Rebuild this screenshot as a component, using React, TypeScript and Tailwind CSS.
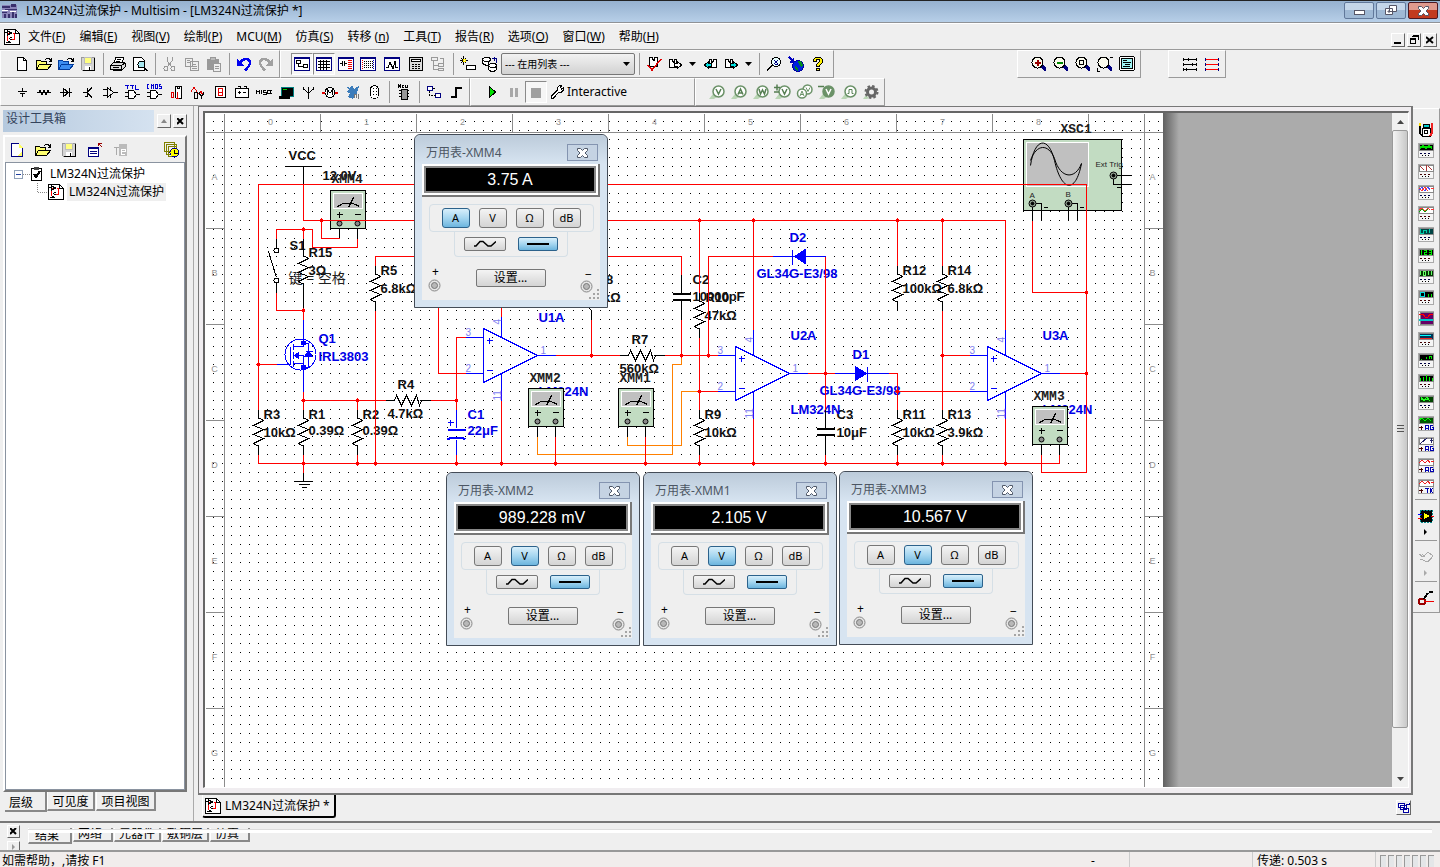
import { ReactNode } from "react";

type Point = [number, number];

const uiFont = "font-['Noto_Sans','Noto_Sans_CJK_SC',sans-serif]";

function Icon({ children, w = 16 }: { children: ReactNode; w?: number }) {
  return (
    <svg width={w} height={16} viewBox={`0 0 ${w} 16`} fill="none" stroke="#000" shapeRendering="crispEdges" className="shrink-0" aria-hidden="true">
      {children}
    </svg>
  );
}

function Tool({ label, children, boxed }: { label: string; children: ReactNode; boxed?: boolean }) {
  return (
    <button
      title={label}
      aria-label={label}
      className={`flex h-[22px] w-[22px] shrink-0 items-center justify-center ${boxed ? "border border-r-white border-b-white border-t-[#8a8a8a] border-l-[#8a8a8a] bg-[#f6f6f6]" : ""}`}
    >
      {children}
    </button>
  );
}

const Sep = () => (
  <span className="flex w-2 shrink-0 justify-center">
    <span className="h-[22px] w-px bg-[#9a9a9a]" />
  </span>
);

function Bar({ children, className = "" }: { children: ReactNode; className?: string }) {
  return (
    <div className={`flex h-7 shrink-0 items-center border-t border-l border-r border-b border-t-white border-l-white border-r-[#9a9a9a] border-b-[#9a9a9a] pl-[10px] ${className}`}>
      {children}
    </div>
  );
}

const Caret = ({ color = "#000" }: { color?: string }) => (
  <svg width="12" height="8" viewBox="0 0 12 8" className="shrink-0" aria-hidden="true">
    <path d="M2 2h7l-3.500 4z" fill={color} />
  </svg>
);

/* ---------- icons ---------- */

const SchematicIcon = () => (
  <Icon>
    <path d="M.5.500h11l4 4v11H.5z" fill="#fff" />
    <path d="M11.500.500v4h4" />
    <path d="M3.500 12V4.500H6M9 4.500h1.500v6H8" stroke="#f00" />
    <path d="M1 3.500h3M3.500 2v4l4-2zM8.500 7.500l-3 2 3 2M4 12l3 2M2 13.500h3" />
  </Icon>
);
const NewIcon = () => <Icon><path d="M3.500 1.500h6l3 3v10h-9z" fill="#fff" /><path d="M9.500 1.500v3h3" /></Icon>;
const OpenIcon = ({ fill = "#ffff70", stroke = "#000" }) => (
  <Icon>
    <path d="M.5 13.500v-9h4l1 1h5v3" fill={fill} stroke={stroke} />
    <path d="M.5 13.500l3-5h12l-4 5z" fill={fill} stroke={stroke} />
    <path d="M9 3.500l2-1h2l2 2M15.500 2v3h-3" />
  </Icon>
);
const SaveIcon = () => (
  <Icon>
    <path d="M1.500 1.500h13v13h-12l-1-1z" fill="#d4d4d4" stroke="#999" />
    <path d="M4.500 1.500h7v6h-7z" fill="#ffff80" stroke="#bbb" />
    <path d="M5 10h6v4H5z" fill="#fff" stroke="none" />
    <path d="M9 10.500v3M14.500 2v12.500H3" />
  </Icon>
);
const PrintIcon = () => (
  <Icon>
    <path d="M4.500 6.500l1-5h8l-1 5" fill="#fff" />
    <path d="M7 3.500h4M6 5.500h4" />
    <path d="M.5 9.500l3-3h11l1 1v3l-3 3H.5z" fill="#ddd" />
    <path d="M.5 9.500h11v4M12 9l3-2M3 11.500h6M2.500 14.500h9l3-3" />
  </Icon>
);
const PreviewIcon = () => (
  <Icon w={17}>
    <path d="M1.500 1.500h8l3 3v10h-11z" fill="#fff" />
    <circle cx="9.500" cy="8.500" r="3.500" fill="#a8e8f0" />
    <path d="M12 11l4 4M12 12l3 3" />
  </Icon>
);
const CutIcon = () => <Icon><path d="M5 1v4l5 6M10 1v4l-5 6" stroke="#999" /><circle cx="4" cy="12.500" r="2" stroke="#999" /><circle cx="11" cy="12.500" r="2" stroke="#999" /></Icon>;
const CopyIcon = () => <Icon><path d="M1.500 2.500h7v8h-7zM6.500 5.500h8v9h-8z" fill="#eee" stroke="#999" /><path d="M3 4.500h3M3 6.500h3M8 8.500h4M8 10.500h5M8 12.500h5" stroke="#999" /></Icon>;
const PasteIcon = () => <Icon><path d="M1 3h12v11H1z" fill="#999" stroke="none" /><path d="M4.500 1.500h5v3h-5z" fill="#bbb" stroke="#999" /><path d="M7.500 7.500h7v8h-7z" fill="#eee" stroke="#999" /><path d="M9 10.500h4M9 12.500h4" stroke="#999" /></Icon>;
const UndoIcon = ({ color = "#0000f0", flip = false }) => (
  <Icon><g transform={flip ? "translate(16 0) scale(-1 1)" : undefined}><path d="M4 7c2-5 10-5 10-.5 0 3-2 5-5 8" stroke={color} strokeWidth="2.500" /><path d="M1 2v8h7z" fill={color} stroke="none" /></g></Icon>
);
const HierIcon = () => <Icon><path d="M.5 1.500h15v13H.5z" fill="#fff" stroke="#000080" /><path d="M1 2.500h14" stroke="#000080" /><path d="M2.500 4.500h4v3h-4zM9.500 8.500h4v3h-4zM4.500 8v2.500h5" /></Icon>;
const GridIcon = () => <Icon><path d="M.5 1.500h15v13H.5z" fill="#fff" stroke="#000080" /><path d="M1 2.500h14" stroke="#000080" /><path d="M2 5.500h12M2 8.500h12M2 11.500h12M4.500 4v10M7.500 4v10M10.500 4v10" /></Icon>;
const SpiceIcon = () => <Icon><path d="M.5 1.500h15v13H.5z" fill="#fff" stroke="#000080" /><path d="M1 2.500h14" stroke="#000080" /><path d="M2 7.500h2M4.500 5v5M6.500 5v5M7 7.500h2" /><path d="M10 4.500h4M10 6.500h4M10 8.500h4M10 10.500h4M10 12.500h4" stroke="#e00" /></Icon>;
const DotsIcon = () => <Icon><path d="M.5 1.500h15v13H.5z" fill="#fff" stroke="#000080" /><path d="M1 2.500h14" stroke="#000080" /><path d="M4 5.500h9M4 7.500h9M4 9.500h9M4 11.500h9" strokeDasharray="1 1" /><path d="M2.500 4v10" stroke="#e00" strokeDasharray="1 1" /><path d="M13.500 4v10" stroke="#00c" strokeDasharray="1 1" /></Icon>;
const WaveIcon = () => <Icon><path d="M.5 1.500h15v13H.5z" fill="#fff" stroke="#000080" /><path d="M1 2.500h14" stroke="#000080" /><path d="M2 11.500h2l2-5 3 6 2-7v6h3" /></Icon>;
const CalcIcon = () => <Icon><path d="M1.500 1.500h13v13h-13z" fill="#ddd" /><path d="M3.500 3.500h9v2h-9z" fill="#fff" /><path d="M4 8.500h9M4 10.500h9M4 12.500h9" strokeDasharray="2 1" /></Icon>;
const TreeGreyIcon = () => <Icon><path d="M1.500 1.500h6v3h-6zM8.500 7.500h5v3h-5zM8.500 12.500h5v2h-5zM3.500 5v8.500h5M4 9.500h4M10 2.500h3v4" stroke="#999" /></Icon>;
const SparkIcon = () => <Icon><path d="M3.500 0v3M3.500 6v3M0 4.500h3M5 4.500h3M1 2l5 5M6 2L1 7" /><path d="M3 3.500h2v2H3z" stroke="#ffea00" /><path d="M6.500 9.500h9v4h-9z" fill="#fff" /></Icon>;
const DbIcon = () => (
  <Icon>
    <path d="M.5 3.500v4l3 1.500h3V2.500H3z" fill="#fff" /><ellipse cx="4.500" cy="3.500" rx="4" ry="2" fill="#fff" />
    <path d="M6.500 9.500v4l2 1.500h4l2-1.500v-4" fill="#fff" /><ellipse cx="10.500" cy="9.500" rx="4" ry="2" fill="#fff" />
    <path d="M10 2.500h5M14.500 3v4M12.500 1v4" stroke="#000080" />
  </Icon>
);
const CheckIcon = () => <Icon><path d="M3.500 1.500h3v2l2 1v-3h3v9h-8z" fill="#fff" /><path d="M2 9l4 5 9-11" stroke="#e00000" strokeWidth="1.500" /></Icon>;
const BackIcon = ({ fill = "#fff", left = false }) => (
  <Icon><g transform={left ? "translate(16 0) scale(-1 1)" : undefined}><path d="M1.500 3.500h3v2l2 1v-3h2v8h-7z" fill="#fff" /><path d="M6.500 7.500h3v-2l4 3.500-4 3.500v-2h-3z" fill={fill} /></g></Icon>
);
const FindIcon = () => <Icon><circle cx="10" cy="6" r="4.500" fill="#e8ffff" /><path d="M8 4l4 4M12 4L8 8M9 8h3" stroke="#000080" /><path d="M7 9l-6 6M6 9l-5 5" /></Icon>;
const GlobeIcon = () => <Icon><circle cx="10" cy="10" r="5.500" fill="#0020e0" stroke="#0000a0" /><path d="M10 5h3l2 4-2 2-2-2zM7 10l3 2v3l-3-2z" fill="#008c20" stroke="none" /><path d="M1 1l4 4M5.500 2v4h-4" stroke="#0000c0" strokeWidth="1.500" /></Icon>;
const HelpIcon = () => <Icon><path d="M3.500 5.500v-2l2-2h5l2 2v3l-3 3v1h-3v-2l3-3v-2h-3v2zM6.500 12.500h3v2h-3z" fill="#fff200" /></Icon>;

const Magnifier = ({ children }: { children?: ReactNode }) => (
  <Icon><circle cx="6.500" cy="6.500" r="5.500" fill="#fbfbee" />{children}<path d="M11 11l4 4M12 10l3 3" stroke="#000080" strokeWidth="2" /></Icon>
);
const FullIcon = () => <Icon><rect x=".5" y=".5" width="15" height="14" rx="2" fill="#fff" /><path d="M2.500 2.500h11v10h-11z" fill="#9ff5f5" /><path d="M4 4.500h4M4 6.500h8M6 8.500h5M4 10.500h7" /></Icon>;
const RowsIcon = ({ color = "#000", ends = "#000" }) => (
  <Icon>
    <path d="M1 3.500h14M1 8.500h14M1 13.500h14" stroke={color} />
    <path d="M1.500 2v3M14.500 2v3M1.500 7v3M14.500 7v3M1.500 12v3M14.500 12v3" stroke={ends} />
    {color === "#000" && <path d="M6.500 2v3M10.500 7v3M4.500 12v3" />}
  </Icon>
);

/* component row of the place toolbar */
const components: [string, ReactNode][] = [
  ["Source", <path d="M8.500 4v3M4 7.500h9M6 9.500h5M8.500 10v3" />],
  ["Basic", <path d="M1 8.500h2l1-2 2 4 2-4 2 4 2-4 1 2h2" />],
  ["Diode", <path d="M2 8.500h12M5.500 4.500v8l5-4zM11.500 4v9" />],
  ["Transistor", <path d="M3 8.500h4M7.500 4v9M8 7.500l4-4M8 9.500l4 4M5 12.500h3" />],
  ["Analog", <path d="M1 5.500h4M1 11.500h4M5.500 3.500v10l6-5zM12 8.500h4M8.500 3v2M8.500 12v2" />],
  ["TTL", <><path d="M1 1.500h4M3.500 1v4M6 1.500h4M8.500 1v4M11.500 1v4h3" stroke="#0000d0" /><path d="M4.500 6.500h5l3 4-3 4h-5zM1 8.500h3M1 12.500h3M13 10.500h3" fill="#fff" /></>],
  ["CMOS", <><path d="M3 .5H1.500v4H3M5.500 5V.5l1 1 1-1V5M9.500.5h2v4h-2zM15 .5h-2v2h2v2h-2" stroke="#0000d0" /><path d="M4.500 6.500h5l3 4-3 4h-5zM1 8.500h3M1 12.500h3M13 10.500h3" fill="#fff" /></>],
  ["Misc digital", <><path d="M7.500 14V2.500h6v12h-4M9.500 2v2h2V2" fill="#fff" /><path d="M3.500 8.500h2v5h-2zM9.500 8v6M8 14.500h3" stroke="#e00000" strokeWidth="1.500" /></>],
  ["Mixed", <><path d="M1 8l3-5 3 5 2 2 2-3 2 5" stroke="#e00000" /><path d="M4.500 8.500h3v6h-3zM9.500 8v2l2 2 2-2V8M11.500 12v3" /></>],
  ["Indicator", <><path d="M3.500 2.500h10v11h-10z" fill="#fff" /><path d="M6.500 4.500h4v7h-4zM6.500 8.500h4" stroke="#e00000" /></>],
  ["Power", <path d="M1.500 4.500h13v9h-13zM4 2.500h2v2M10 2.500h2v2M4 8.500h3M5.500 7v3M9 8.500h3" fill="#fff" />],
  ["Miscellaneous", <path d="M.5 10V6.500l1.500 1 1.500-1V10M5.500 6v4M10 6.500H7.500v2H10v1.500H7M13.500 6.500H11.500v3h2M16 6.500h-1.500v3H16" />],
  ["Advanced peripherals", <><path d="M3 3h12v9H3z" fill="#000" stroke="#008080" /><path d="M5 5.500h4" stroke="#0c0" /><path d="M1 12.500h10v2H1z" fill="#000" /></>],
  ["RF", <path d="M8.500 15V3M3.500 3v2l5 4 5-4V3" />],
  ["Electromechanical", <><circle cx="8" cy="8.500" r="5" fill="#fff" /><path d="M5.500 11V6l2.500 3 2.500-3v5" /><path d="M0 8.500h3M13 8.500h3" stroke="#e00000" strokeWidth="2" /></>],
  ["NI component", <><path d="M1 2l5 2 2-3 2 4 5-3-2 7-4 6-5-2 2-4-4-1 3-2z" fill="#3c7cba" stroke="none" /><path d="M10 14v-4h2v4M14.500 10v5" stroke="#777" /></>],
  ["Connector", <><rect x="4.500" y="1.500" width="8" height="13" rx="4" fill="#fff" /><path d="M7 4v8M10 4v8" strokeDasharray="1 2" /></>],
];

const MCUIcon = () => <Icon><path d="M2.500 4V1l1 1 1-1v3M8 1.500H6.500v2H8M9.500 1v2.500h2V1" /><path d="M5 5h6v10H5z" fill="#999" /><path d="M3 6.500h10M3 9.500h10M3 12.500h10" strokeDasharray="2 6" /></Icon>;
const BlockIcon = () => <Icon><path d="M1.500 2.500h5v4h-5z" fill="#fff" stroke="#000080" /><path d="M9.500 9.500h5v4h-5z" fill="#fff" stroke="#000080" /><path d="M7 4.500h3M3.500 7v4.500h6" strokeDasharray="2 1" /></Icon>;
const StepIcon = () => <Icon><path d="M3 13h5V4h6" strokeWidth="2" /></Icon>;
const WrenchIcon = () => <Icon w={14}><path d="M1.500 12l6-6V3.500l2-2h2l-1 2 1 1.500 2-1v2l-2 2H9l-5.500 6h-2z" fill="#fff" /></Icon>;

function Probe({ t, pre, solid }: { t: string; pre?: string; solid?: boolean }) {
  return (
    <svg width="18" height="16" viewBox="0 0 18 16" aria-hidden="true" fill="none">
      <path d="M1 15l4-5 4 3-3 2z" fill="#b9d5b4" />
      <circle cx="10.500" cy="7.500" r="5.500" fill={solid ? "#6b9268" : "#fff"} stroke="#6b9268" strokeWidth="1.500" />
      {t === "n" && <path d="M7.500 9.500H9v-4h3v4h1.500" stroke="#557e52" />}
      {t === "V" && <path d="M8 5l2.500 5L13 5" stroke={solid ? "#fff" : "#557e52"} strokeWidth="1.500" />}
      {t === "A" && <path d="M8 10.500l2.500-5.500 2.500 5.500M9 9h3" stroke="#557e52" strokeWidth="1.500" />}
      {t === "W" && <path d="M7 5l1.500 5 2-4 2 4L14 5" stroke="#557e52" strokeWidth="1.500" />}
      {pre && <path d={pre === "±" ? "M0 3.500h6M3 .5v6M0 8h5" : "M0 2.500h6"} stroke="#557e52" strokeWidth="1.500" />}
    </svg>
  );
}

/* instrument rack on the right edge: screen colour and trace */
const instruments: { name: string; bg: string; art: ReactNode }[] = [
  { name: "Function generator", bg: "#000", art: <path d="M2 5l3-2 3 2 3-2 3 2" stroke="#0d0" strokeWidth="2" /> },
  { name: "Wattmeter", bg: "#fff", art: <path d="M2 2l4 4M10 2l4 4M8 1v6" stroke="#a33" /> },
  { name: "Oscilloscope", bg: "#fff", art: <><path d="M1 5l3-3 3 4 3-4 2 3" stroke="#44f" /><path d="M1 3l3 3 3-4 3 4M13 3h3" stroke="#f33" /></> },
  { name: "Four channel oscilloscope", bg: "#fff", art: <><path d="M1 4l3-2 3 3 3-3 2 2M13 3h3" stroke="#f33" /><path d="M1 6l3-3 3 3 3-3" stroke="#0a0" /></> },
  { name: "Bode plotter", bg: "#044", art: <path d="M2 2v4h3V3h3v3M11 2v4" stroke="#0ca" /> },
  { name: "Frequency counter", bg: "#000", art: <path d="M3.500 2v5M6 2.500h2.500v2h-2v2H9M11 2.500h2.500v4H11M11 4.500h2" stroke="#0e0" /> },
  { name: "Word generator", bg: "#030", art: <path d="M2.500 2v4M5.500 2v4h2V2zM10.500 2v4M13.500 2v4" stroke="#6f6" /> },
  { name: "Logic converter", bg: "#000", art: <><path d="M2 2h4v4H2z" stroke="#0dd" /><path d="M10 4v3M13 4v3" stroke="#0e0" /></> },
  { name: "Logic analyzer", bg: "#606", art: <><path d="M1 3h4l2 3h3l2-3h3" stroke="#f00" /><path d="M1 9h14" stroke="#00c8c8" strokeWidth="2" /></> },
  { name: "IV analyzer", bg: "#035", art: <><path d="M2 3l4 1 3-1 4 1" stroke="#0ff" /><path d="M2 6h12" stroke="#e22" /></> },
  { name: "Distortion analyzer", bg: "#000", art: <path d="M3 6h1M8 6V4M11 6V3h2v3" stroke="#0e0" /> },
  { name: "Spectrum analyzer", bg: "#000", art: <path d="M2.500 7V4M5.500 7V3M8.500 7V1M11.500 7V3M14 7V4" stroke="#0f0" /> },
  { name: "Network analyzer", bg: "#040", art: <path d="M3 2l3 4 3-4 3 4M3 4h8" stroke="#2f2" /> },
  { name: "Agilent function generator", bg: "#050", art: <path d="M1 4l3-2 3 3 3-3 3 3" stroke="#0f0" /> },
  { name: "Agilent multimeter", bg: "#fff", art: <path d="M2 7l7-6M12 3h3M13.500 1v5" stroke="#226" /> },
  { name: "Agilent oscilloscope", bg: "#fff", art: <path d="M1 5l3-3 3 3 3-3 2 3M13 3h3" stroke="#e22" /> },
  { name: "Tektronix oscilloscope", bg: "#fff", art: <path d="M1 5l3-3 3 3 3-3 2 3M13 3h3" stroke="#e22" /> },
];

/* ---------- schematic ---------- */

const range = (n: number) => Array.from({ length: n }, (_, i) => i);

const redWires = [
  "M258 411V184H1086V472H1041V454", "M303 184V220H1005V329", "M321 220V238H339", "M357 238V247H312V229H276V238",
  "M276 292V310H303V319", "M303 229V238", "M303 391V400H385", "M258 364H276", "M303 400V409M357 400V409", "M258 454V463H1059V454",
  "M303 454V472M357 454V463", "M375 265V256H681V274", "M375 310V463", "M429 400H456V337H465", "M456 400V409M456 454V463",
  "M465 373H438V256", "M501 256V316M501 400V463", "M555 355H619M663 355H717M591 355V319", "M681 319V355",
  "M555 436V463M645 436V463", "M699 220V292M699 337V409M699 391H717M699 454V463", "M708 355V256H772", "M753 220V329M753 418V463",
  "M825 256V409M825 454V463", "M807 373H834M888 373H897V409M897 391H969M897 454V463", "M897 220V265M942 220V265",
  "M942 310V409M942 355H969M942 454V463", "M1005 418V463", "M1059 373H1086", "M1032 220V292H1086",
];
const orangeWires = ["M681 355V364H672V454H537V436", "M627 436V445H681V391H699"];
const blueWires = [
  "M303 319V341M303 369V391M276 364H290", "M465 337H483M465 373H483M537 355H555M501 316V337M501 373V400",
  "M456 409V427M456 439V454", "M717 355H735M717 391H735M789 373H807M753 329V355M753 391V418",
  "M772 256H825M834 373H888", "M969 355H987M969 391H987M1041 373H1059M1005 329V355M1005 391V418",
];
const blackWires = [
  "M285 166H321M303 166V184", "M339 228V238M357 228V238", "M276 238V247M276 283V292M268 251L276 277", "M303 282V310",
  "M681 274V293M681 299V319", "M825 409V428M825 434V454", "M591 319V310l-4-4", "M303 472V481M294 481H312M298 484H309M301 487H306",
  "M537 426V436M555 426V436M627 426V436M645 426V436M1041 444V454M1059 444V454",
];
const junctions: Point[] = [
  [321, 220], [303, 229], [303, 310], [258, 364], [303, 400], [357, 400], [456, 400], [591, 355], [681, 355], [708, 355],
  [699, 220], [753, 220], [897, 220], [942, 220], [699, 391], [825, 373], [897, 391], [942, 355], [1086, 292], [1086, 373],
  ...[303, 357, 375, 456, 501, 555, 645, 699, 753, 825, 897, 942, 1005].map((x): Point => [x, 463]),
];
const resistors: Point[] = [[303, 247], [375, 265], [897, 265], [942, 265], [699, 292], [258, 409], [303, 409], [357, 409], [699, 409], [897, 409], [942, 409]];

const labels: [string, number, number][] = [
  ["VCC", 288, 159], ["12.0V", 322, 179], ["S1", 289, 249], ["R15", 308, 256], ["3Ω", 308, 274], ["R5", 380, 274], ["6.8kΩ", 380, 292],
  ["R4", 397, 388], ["4.7kΩ", 387, 417], ["R3", 263, 418], ["10kΩ", 263, 436], ["R1", 308, 418], ["0.39Ω", 308, 434],
  ["R2", 362, 418], ["0.39Ω", 362, 434], ["R7", 631, 343], ["560kΩ", 619, 372], ["R8", 596, 283], ["10kΩ", 588, 301],
  ["C2", 692, 283], ["10000pF", 692, 300], ["R10", 705, 301], ["47kΩ", 704, 319], ["R9", 704, 418], ["10kΩ", 704, 436],
  ["C3", 836, 418], ["10μF", 836, 436], ["R12", 902, 274], ["100kΩ", 902, 292], ["R14", 947, 274], ["6.8kΩ", 947, 292],
  ["R11", 902, 418], ["10kΩ", 902, 436], ["R13", 947, 418], ["3.9kΩ", 947, 436],
];
const blueLabels: [string, number, number][] = [
  ["Q1", 318, 342], ["IRL3803", 318, 360], ["C1", 467, 418], ["22μF", 467, 434], ["U1A", 538, 321], ["LM324N", 538, 395],
  ["D2", 789, 241], ["GL34G-E3/98", 756, 277], ["U2A", 790, 339], ["D1", 852, 358], ["GL34G-E3/98", 819, 394], ["LM324N", 790, 413],
  ["U3A", 1042, 339], ["LM324N", 1042, 413],
];
const meterLabels: [string, number, number][] = [["XMM4", 331, 182], ["XMM2", 529, 381], ["XMM1", 619, 381], ["XMM3", 1033, 399], ["XSC1", 1060, 132]];

function OpAmp({ x, y }: { x: number; y: number }) {
  return (
    <g transform={`translate(${x} ${y})`}>
      <path d="M0 0V54L54 27ZM3 12h6M6 9v6M3 42h6" stroke="#0000ff" />
      <g className="font-['Liberation_Sans',sans-serif] text-[10px]" fill="#8080f0" stroke="none">
        <text x="-18" y="7">3</text>
        <text x="-18" y="43">2</text>
        <text x="57" y="25">1</text>
        <text transform="translate(17 -4) rotate(-90)">4</text>
        <text transform="translate(17 72) rotate(-90)">11</text>
      </g>
    </g>
  );
}

function MeterSymbol({ x, y }: { x: number; y: number }) {
  return (
    <g transform={`translate(${x} ${y})`}>
      <path d="M0 0h35v38H0z" fill="#c2dcc2" stroke="#000" />
      <path d="M3 3h29v15H3z" fill="#c0c0c0" stroke="#fff" />
      <path d="M7 16q10-7 22 0M18 17l5-10M6 24h6M9 21v6M24 24h6" stroke="#000" />
      <circle cx="9" cy="33" r="2.500" fill="#888" stroke="#000" shapeRendering="auto" />
      <circle cx="27" cy="33" r="2.500" fill="#888" stroke="#000" shapeRendering="auto" />
    </g>
  );
}

function Scope() {
  return (
    <g>
      <path d="M1023 139h98v71h-98z" fill="#c2dcc2" stroke="#000" />
      <path d="M1026 142h62v44h-62z" fill="#c0c0c0" stroke="#fff" />
      <path d="M1030 165c4-28 18-30 24-5 7 31 21 34 27 3M1030 160c6-17 18-17 24-2 6 21 21 21 27 5" stroke="#000" shapeRendering="auto" />
      <path d="M1032 203v17M1032 203h9v17M1068 203v17M1068 203h9v17M1113 175h18M1113 175v9h18M1043 207h4M1079 207h4M1116 187h4" stroke="#000" />
      {[[1032, 203], [1068, 203], [1113, 175]].map(([x, y]) => (
        <g key={x} stroke="#000" shapeRendering="auto">
          <circle cx={x} cy={y} r="3.500" fill="#9fb09f" />
          <circle cx={x} cy={y} r="1.500" fill="#000" />
        </g>
      ))}
      <g className="font-['Liberation_Sans',sans-serif] text-[8px]" stroke="none" fill="#222">
        <text x="1029" y="197">A</text>
        <text x="1065" y="196">B</text>
        <text x="1095" y="166">Ext Trig</text>
      </g>
    </g>
  );
}

function Schematic() {
  return (
    <svg width="958" height="674" viewBox="205 113 958 674" className="block shrink-0" role="img" aria-label="LM324N过流保护" fill="none">
      <defs>
        <pattern id="dots" x="213" y="121" width="9" height="9" patternUnits="userSpaceOnUse">
          <rect width="1" height="1" fill="#000" />
        </pattern>
      </defs>
      <rect x="205" y="113" width="958" height="674" fill="#fff" />
      <rect x="205" y="113" width="958" height="674" fill="url(#dots)" />
      <g transform="translate(.5 .5)" shapeRendering="crispEdges">
        <g stroke="#8c8c8c">
          <path d="M224 113V787M1144 113V787M205 132H1163" />
          <path d={range(9).map((i) => `M${320 + i * 96} 113v19`).join("")} />
          <path d={range(6).map((i) => `M205 ${228 + i * 96}h19M1144 ${228 + i * 96}h19`).join("")} />
        </g>
        <g className="font-['Liberation_Sans',sans-serif] text-[9px]" fill="#909090" textAnchor="middle">
          {range(9).map((i) => <text key={i} x={270 + i * 96} y="124">{i}</text>)}
          {"ABCDEFG".split("").map((c, i) => (
            <g key={c}>
              <text x="214" y={179 + i * 96}>{c}</text>
              <text x="1152" y={179 + i * 96}>{c}</text>
            </g>
          ))}
        </g>

        <g className="font-['Liberation_Sans',sans-serif] text-[13px] font-bold" fill="#101010">
          {labels.map(([t, x, y]) => <text key={`${t}${x}${y}`} x={x} y={y}>{t}</text>)}
        </g>
        <text x="288" y="282" fill="#202020" className="font-['Noto_Sans','Noto_Sans_CJK_SC',sans-serif] text-[14px]">键 = 空格</text>
        <g className="font-['Liberation_Sans',sans-serif] text-[13px] font-bold" fill="#0000e8">
          {blueLabels.map(([t, x, y]) => <text key={`${t}${x}${y}`} x={x} y={y}>{t}</text>)}
        </g>

        <MeterSymbol x={330} y={190} />
        <MeterSymbol x={528} y={388} />
        <MeterSymbol x={618} y={388} />
        <MeterSymbol x={1032} y={406} />
        <Scope />
        <g className="font-['Liberation_Mono',monospace] text-[13px] font-bold" fill="#202020">
          {meterLabels.map(([t, x, y]) => <text key={t} x={x} y={y}>{t}</text>)}
        </g>

        <path d={orangeWires.join("")} stroke="#ff8000" />
        <path d={blueWires.join("")} stroke="#0000ff" />
        <path d={blackWires.join("")} stroke="#000" />
        <path d={redWires.join("")} stroke="#ff0000" />

        {resistors.map(([x, y]) => (
          <path key={`${x}-${y}`} d={`M${x} ${y}v8l5 3-10 5 10 4-10 5 10 4-10 5 5 3v8`} stroke="#000" />
        ))}
        <path d="M303 238v9" stroke="#000" />
        {[[385, 400], [619, 355]].map(([x, y]) => (
          <path key={x} d={`M${x} ${y}h9l2-5 5 10 5-10 5 10 5-10 3 10 2-5h9`} stroke="#000" />
        ))}

        <path d="M672 293h18M672 299h18M816 428h18M816 434h18" stroke="#000" strokeWidth="2" />
        <path d="M447 429h18M447 439l4-2h10l4 2" stroke="#0000ff" strokeWidth="2" />
        <path d="M447 422h6M450 419v6" stroke="#0000ff" />
        <circle cx="276" cy="250" r="2.500" fill="#fff" stroke="#000" />
        <circle cx="276" cy="280" r="2.500" fill="#fff" stroke="#000" />

        <OpAmp x={483} y={328} />
        <OpAmp x={735} y={346} />
        <OpAmp x={987} y={346} />

        {/* MOSFET */}
        <g stroke="#0000ff">
          <circle cx="300" cy="354" r="15.500" />
          <path d="M290 364V346M293 343v6M293 351v7M293 360v6M293 346h10v-5M293 355h10v14M293 363h10M303 343h5v24h-5M305 351h7" />
          <path d="M304 356l4-5 4 5zM294 355l4-3v6zM301 341h4v3h-4zM301 365h4v3h-4z" fill="#0000ff" />
        </g>
        <path d="M793 256l12-8v16zM867 373l-13-8v16z" fill="#0000ff" />
        <path d="M792 249v15M867 366v15" stroke="#0000ff" />

        <g fill="#ff0000">
          {junctions.map(([x, y]) => <path key={`${x}-${y}`} d={`M${x - 2} ${y}l2-2 1 2-1 2z`} stroke="#ff0000" />)}
        </g>
      </g>
    </svg>
  );
}

/* ---------- multimeter window ---------- */

const keyIdle = "border-[#777] bg-gradient-to-b from-[#f4f4f4] to-[#d4d4d4]";
const keyOn = "border-[#2c628b] bg-gradient-to-b from-[#d8effb] via-[#a5d6f0] to-[#6cb5de]";

function Jack() {
  return (
    <svg width="13" height="13" viewBox="0 0 13 13" aria-hidden="true">
      <circle cx="6.500" cy="6.500" r="5.500" fill="#e6e6e6" stroke="#888" />
      <circle cx="6.500" cy="6.500" r="3" fill="#b8b8b8" stroke="#777" />
    </svg>
  );
}

function Multimeter({ name, value, mode, className }: { name: string; value: string; mode: string; className: string }) {
  return (
    <section className={`absolute flex w-[194px] flex-col rounded-t-md border border-[#444c57] bg-[#d7e4f1] px-[7px] pb-[7px] ${className}`}>
      <header className="-mx-[7px] flex h-[29px] items-center rounded-t-md bg-gradient-to-b from-[#bccbda] to-[#d7e4f1] pt-[6px] pr-[9px] pl-[11px]">
        <h2 className="flex-1 text-[12px] leading-4 text-[#4c5663]">万用表-{name}</h2>
        <button aria-label="关闭" className="flex h-[17px] w-[31px] items-center justify-center border border-[#8494b0] bg-[#c5d3e3]">
          <svg width="11" height="10" viewBox="0 0 11 10" fill="#fff" stroke="#4f5868" aria-hidden="true">
            <path d="M.5.5h3l2 2 2-2h3v2l-2.500 2.500 2.500 2.500v2h-3l-2-2-2 2h-3v-2L3 5 .5 2.500z" />
          </svg>
        </button>
      </header>
      <div className="border-r-2 border-b-2 border-[#777] bg-white p-[2px]">
        <output className="block h-[27px] border-2 border-[#888] bg-black text-center font-['Liberation_Sans',sans-serif] text-[16px] leading-[24px] text-white">{value}</output>
      </div>
      <div className="flex flex-col items-center bg-[#efefef] pt-[7px]">
        <div className="flex h-7 items-center gap-[9px] rounded border border-[#d5dfe6] px-[12px]">
          {["A", "V", "Ω", "dB"].map((k) => (
            <button key={k} className={`h-5 w-7 rounded-[3px] border text-[11px] leading-4 ${k === mode ? keyOn : keyIdle}`}>{k}</button>
          ))}
        </div>
        <div className="flex h-[25px] items-center gap-3 rounded-b border border-t-0 border-[#d5dfe6] px-[9px]">
          <button aria-label="交流" className={`flex h-[14px] w-[42px] items-center justify-center rounded-[2px] border ${keyIdle}`}>
            <svg width="22" height="8" viewBox="0 0 22 8" fill="none" stroke="#000" strokeWidth="1.500" aria-hidden="true"><path d="M0 6h2l4-4.500h3L14 6h3l5-4.500" /></svg>
          </button>
          <button aria-label="直流" className={`flex h-[14px] w-10 items-center justify-center rounded-[2px] border ${keyOn}`}>
            <span className="h-[2px] w-[22px] bg-black" />
          </button>
        </div>
        <div className="flex h-[43px] w-full justify-between pt-[8px] pr-[7px] pl-[6px]">
          <div className="flex flex-col text-[12px] leading-[14px]"><span className="pl-1">+</span><Jack /></div>
          <button className={`mt-1 mb-auto flex h-[18px] w-[70px] items-center justify-center rounded-[2px] border text-[12px] leading-4 ${keyIdle}`}>设置...</button>
          <div className="flex flex-col items-center pt-1 text-[12px] leading-[11px]"><span className="pl-1">−</span><Jack /></div>
        </div>
      </div>
      <svg width="11" height="11" viewBox="0 0 11 11" fill="#a5a5a5" className="absolute right-[7px] bottom-[7px]" aria-hidden="true">
        <path d="M8 0h2v2H8zM4 4h2v2H4zM8 4h2v2H8zM0 8h2v2H0zM4 8h2v2H4zM8 8h2v2H8z" />
      </svg>
    </section>
  );
}

/* ---------- window parts ---------- */

const menus: [string, string][] = [
  ["文件(", "F"], ["编辑(", "E"], ["视图(", "V"], ["绘制(", "P"], ["MCU(", "M"], ["仿真(", "S"],
  ["转移 (", "n"], ["工具(", "T"], ["报告(", "R"], ["选项(", "O"], ["窗口(", "W"], ["帮助(", "H"],
];

const raised = "border border-t-white border-l-white border-r-[#666] border-b-[#666]";

function TitleBar() {
  const glass = "flex h-[17px] w-[30px] items-center justify-center rounded-[2px] border";
  return (
    <header className="flex h-[23px] shrink-0 items-center border-t border-b border-t-[#222] border-b-[#8f9296] bg-gradient-to-b from-[#96b1cf] to-[#b7cfe8] pr-[2px] pb-[2px] pl-[2px]">
      <svg width="16" height="16" viewBox="0 0 16 16" shapeRendering="crispEdges" aria-hidden="true">
        <path d="M0 2h15v13H0z" fill="#8a84b8" />
        <path d="M0 3h8v2H0zM3 6h12v1H3zM0 9h5v1H0zM9 1h5v3H9zM2 11h2v4H2zM6 11h2v4H6zM10 9h2v6h-2zM13 11h2v4h-2z" fill="#38306c" />
        <path d="M0 7h6v1H0zM8 8h6v1H8z" fill="#fff" />
      </svg>
      <h1 className="flex-1 pl-2 text-[12px] leading-4">LM324N过流保护 - Multisim - [LM324N过流保护 *]</h1>
      <div className="flex gap-[2px]">
        <button aria-label="最小化" className={`${glass} border-[#61789a] bg-gradient-to-b from-[#c4d6e9] from-50% to-[#9fb9d5] to-50%`}><span className="mt-1 h-[5px] w-[11px] border border-[#556] bg-white" /></button>
        <button aria-label="还原" className={`${glass} border-[#61789a] bg-gradient-to-b from-[#c4d6e9] from-50% to-[#9fb9d5] to-50%`}>
          <svg width="12" height="11" viewBox="0 0 12 11" fill="#fff" stroke="#556" aria-hidden="true"><path d="M4.500.5h7v6h-7zM.5 3.500h7v6h-7zM3 6h2v1H3z" /></svg>
        </button>
        <button aria-label="关闭" className={`${glass} border-[#4b1822] bg-gradient-to-b from-[#e09a8e] from-50% to-[#c23a1f] to-50%`}>
          <svg width="11" height="10" viewBox="0 0 11 10" fill="#fff" stroke="#556" aria-hidden="true"><path d="M.5.5h3l2 2 2-2h3v2l-2.500 2.500 2.500 2.500v2h-3l-2-2-2 2h-3v-2L3 5 .5 2.500z" /></svg>
        </button>
      </div>
    </header>
  );
}

function MenuBar() {
  const small = `flex h-[14px] w-[14px] items-center justify-center ${raised}`;
  return (
    <nav className="flex h-[27px] shrink-0 items-center border-t border-b border-t-white border-b-[#9a9a9a] pr-[3px] pl-1">
      <SchematicIcon />
      <div className="flex pl-px">
        {menus.map(([t, k]) => (
          <button key={t} className="px-[7px] text-[12px] leading-4">{t}<u>{k}</u>)</button>
        ))}
      </div>
      <div className="mt-[6px] ml-auto flex gap-[2px]">
        <button aria-label="最小化文档" className={small}><svg width="8" height="8" aria-hidden="true"><path d="M0 6h7v2H0z" /></svg></button>
        <button aria-label="还原文档" className={small}><svg width="9" height="9" fill="none" stroke="#000" shapeRendering="crispEdges" aria-hidden="true"><path d="M2.500.5h6v4M2 1.500h6M.5 3.500h5v5h-5zM0 4.500h6" /></svg></button>
        <button aria-label="关闭文档" className={small}><svg width="8" height="8" stroke="#000" strokeWidth="2" aria-hidden="true"><path d="M0 1l7 6M7 1L0 7" /></svg></button>
      </div>
    </nav>
  );
}

function StandardToolbar() {
  return (
    <div className="flex shrink-0">
      <Bar className="w-[280px]">
        <Tool label="新建"><NewIcon /></Tool>
        <Tool label="打开"><OpenIcon /></Tool>
        <Tool label="打开样本"><OpenIcon fill="#3c8cf0" stroke="#003a9c" /></Tool>
        <Tool label="保存"><SaveIcon /></Tool>
        <Sep />
        <Tool label="打印"><PrintIcon /></Tool>
        <Tool label="打印预览"><PreviewIcon /></Tool>
        <Sep />
        <Tool label="剪切"><CutIcon /></Tool>
        <Tool label="复制"><CopyIcon /></Tool>
        <Tool label="粘贴"><PasteIcon /></Tool>
        <Sep />
        <Tool label="撤销"><UndoIcon /></Tool>
        <Tool label="重做"><UndoIcon color="#a0a0a0" flip /></Tool>
      </Bar>
      <Bar className="w-[554px]">
        <Tool label="设计工具箱" boxed><HierIcon /></Tool>
        <Tool label="电子表格视图" boxed><GridIcon /></Tool>
        <Tool label="SPICE 网表"><SpiceIcon /></Tool>
        <Tool label="面包板"><DotsIcon /></Tool>
        <span className="w-[2px]" />
        <Tool label="图示仪"><WaveIcon /></Tool>
        <span className="w-[2px]" />
        <Tool label="后处理器"><CalcIcon /></Tool>
        <Tool label="母电路图"><TreeGreyIcon /></Tool>
        <Sep />
        <Tool label="元器件向导"><SparkIcon /></Tool>
        <Tool label="数据库管理器"><DbIcon /></Tool>
        <label className="relative flex items-center">
          <span className="sr-only">在用列表</span>
          <select className="h-[22px] w-[134px] appearance-none rounded-[2px] border border-[#777] bg-gradient-to-b from-[#f2f2f2] to-[#d2d2d2] pl-[3px] text-[10px] leading-4">
            <option>--- 在用列表 ---</option>
          </select>
          <span className="pointer-events-none absolute right-[2px]"><Caret /></span>
        </label>
        <Sep />
        <Tool label="电器法则查验"><CheckIcon /></Tool>
        <Tool label="转移到 PCB"><BackIcon /></Tool>
        <Caret />
        <Tool label="反向注解"><BackIcon fill="#00e0e0" left /></Tool>
        <Tool label="正向注解"><BackIcon fill="#00e0e0" /></Tool>
        <Caret />
        <Sep />
        <Tool label="查找范例"><FindIcon /></Tool>
        <Tool label="教育网站"><GlobeIcon /></Tool>
        <Tool label="帮助"><HelpIcon /></Tool>
      </Bar>
      <div className="min-w-0 flex-1" />
      <Bar className="mr-[27px] w-[124px]">
        <Tool label="放大"><Magnifier><path d="M4 6.500h6M6.500 4v6" stroke="#900" strokeWidth="2" /></Magnifier></Tool>
        <Tool label="缩小"><Magnifier><path d="M4 6.500h6" stroke="#080" strokeWidth="2" /></Magnifier></Tool>
        <Tool label="缩放区域"><Magnifier><path d="M4.500 4.500h4v4h-4z" /></Magnifier></Tool>
        <Tool label="缩放页面"><Magnifier><path d="M13 1h3v3M0 12v3h3" /></Magnifier></Tool>
        <Tool label="全屏"><FullIcon /></Tool>
      </Bar>
      <Bar className="mr-[214px] w-[58px]">
        <Tool label="总线"><RowsIcon /></Tool>
        <Tool label="导线"><RowsIcon color="#f00" ends="#000080" /></Tool>
      </Bar>
    </div>
  );
}

function ComponentToolbar() {
  return (
    <div className="flex shrink-0">
      <Bar className="w-[470px]">
        {components.map(([name, art]) => <Tool key={name} label={name}><Icon>{art}</Icon></Tool>)}
        <Sep />
        <Tool label="MCU"><MCUIcon /></Tool>
        <Sep />
        <Tool label="层次块"><BlockIcon /></Tool>
        <Tool label="总线"><StepIcon /></Tool>
      </Bar>
      <Bar className="w-[225px]">
        <Tool label="运行"><Icon><path d="M5.500 2.500v11l6-5.500z" fill="#00e000" /></Icon></Tool>
        <Tool label="暂停"><Icon><path d="M4 4h3v9H4zM9 4h3v9H9z" fill="#a8a8a8" stroke="none" /></Icon></Tool>
        <Tool label="停止" boxed><Icon><path d="M3 4h10v10H3z" fill="#a0a0a0" stroke="none" /></Icon></Tool>
        <button className="flex items-center gap-[3px] pl-[3px] text-[12px] leading-4"><WrenchIcon />Interactive</button>
      </Bar>
      <Bar className="w-[190px]">
        <Tool label="电压探针"><Probe t="V" /></Tool>
        <Tool label="电流探针"><Probe t="A" /></Tool>
        <Tool label="功率探针"><Probe t="W" /></Tool>
        <Tool label="差分探针"><Probe t="V" pre="±" /></Tool>
        <Tool label="电压电流探针">
          <svg width="18" height="16" viewBox="0 0 18 16" fill="#fff" stroke="#6b9268" strokeWidth="1.500" aria-hidden="true">
            <circle cx="11.500" cy="5.500" r="4.500" /><path d="M10 3.500l2 4 2-4" fill="none" strokeWidth="1" />
            <circle cx="6" cy="9.500" r="4.500" /><path d="M4 12l2-5 2 5M5 10.500h2" fill="none" strokeWidth="1" />
          </svg>
        </Tool>
        <Tool label="参考探针"><Probe t="V" pre="-" solid /></Tool>
        <Tool label="数字探针"><Probe t="n" /></Tool>
        <Tool label="探针设置">
          <svg width="16" height="16" viewBox="0 0 16 16" fill="none" stroke="#666" aria-hidden="true">
            <path d="M0 15l3-4 3 3-2 1z" fill="#b9d5b4" stroke="none" />
            <circle cx="8.500" cy="8" r="4" strokeWidth="3" />
            <circle cx="8.500" cy="8" r="6" strokeWidth="2" strokeDasharray="2.500 2.200" />
          </svg>
        </Tool>
      </Bar>
    </div>
  );
}

function DesignToolbox() {
  const mini = `flex h-[14px] w-[14px] items-center justify-center ${raised}`;
  return (
    <aside className="flex w-[194px] shrink-0 flex-col border-r border-[#aaa] pt-[4px] pl-[3px]">
      <div className="flex h-[22px] items-center gap-[2px]">
        <h2 className="h-full w-[151px] bg-gradient-to-r from-[#b5c9de] to-[#d5e2f0] pl-[3px] text-[12px] leading-[18px] text-[#34435c]">设计工具箱</h2>
        <button aria-label="停靠" className={`ml-[1px] ${mini}`}><svg width="6" height="4" aria-hidden="true"><path d="M0 4l3-4 3 4z" fill="#888" /></svg></button>
        <button aria-label="关闭工具箱" className={mini}><svg width="7" height="7" stroke="#000" strokeWidth="2" aria-hidden="true"><path d="M0 0l6 6M6 0L0 6" /></svg></button>
      </div>
      <div className="mt-[3px] flex w-[184px] flex-1 flex-col border-2 border-t-white border-l-white border-r-[#777] border-b-[#777]">
        <div className="flex h-[25px] shrink-0 items-center pr-[2px] pl-px">
          <Tool label="新建"><Icon><path d="M2.500 1.500h7l4 4v9h-11z" fill="#fff" stroke="#000080" /><path d="M10 1v5h4M8 14h5v-5z" fill="#ff6" stroke="none" /></Icon></Tool>
          <span className="w-1" />
          <Tool label="打开"><OpenIcon /></Tool>
          <span className="w-1" />
          <Tool label="保存"><SaveIcon /></Tool>
          <span className="w-1" />
          <Tool label="关闭"><Icon><path d="M1.500 5.500h10v9h-10z" fill="#fff" stroke="#000080" /><path d="M1 6.500h11M3 9.500h7M3 11.500h7" stroke="#000080" /><path d="M15 5l-4-4M11.500 4V1.500h3" stroke="#900" /></Icon></Tool>
          <span className="w-1" />
          <Tool label="重命名"><Icon><path d="M1 5.500h6M3.500 6v7" stroke="#aaa" /><path d="M6 2h8v12H6z" fill="#bbb" stroke="none" /><path d="M8 9.500h4v-2H8.500v5H12" stroke="#fff" /></Icon></Tool>
          <span className="flex-1" />
          <Tool label="修订历史"><Icon><path d="M.5.500h10v9H.5zM2.500 2.500h10v10h-10z" stroke="#808000" fill="#efefef" /><path d="M4.500 4.500h8v10h-8z" stroke="#808000" /><circle cx="10.500" cy="10.500" r="4.500" fill="#ff0" stroke="#000080" /><path d="M10.500 8v3h3" /></Icon></Tool>
        </div>
        <ul className="flex-1 border border-[#8a93a0] bg-white pt-[2px] pl-[8px] text-[12px] leading-[18px]">
          <li>
            <span className="flex items-center">
              <svg width="36" height="16" viewBox="0 0 36 16" shapeRendering="crispEdges" fill="none" aria-hidden="true">
                <path d="M.5 4.500h8v8h-8z" stroke="#8fa0b8" fill="#fff" /><path d="M2 8.500h5" stroke="#2040a0" /><path d="M9 8.500h9" stroke="#888" strokeDasharray="1 1" />
                <path d="M17.500 2.500h10v12h-10z" stroke="#000" fill="#fff" /><path d="M20 1h5v3h-5z" fill="#444" /><path d="M20 8l2 3 4-6" stroke="#000" strokeWidth="2" />
              </svg>
              LM324N过流保护
            </span>
            <ul>
              <li className="flex items-center pl-[23px]">
                <svg width="11" height="18" shapeRendering="crispEdges" aria-hidden="true"><path d="M.5 0v9.500H11" fill="none" stroke="#888" strokeDasharray="1 1" /></svg>
                <SchematicIcon />
                <span className="ml-[3px] bg-[#efefef] px-[2px]">LM324N过流保护</span>
              </li>
            </ul>
          </li>
        </ul>
      </div>
      <div className="flex h-[29px] items-start pl-[2px] text-[12px] leading-4">
        <button className="h-5 w-[42px] border-r-2 border-b-2 border-[#888] pr-2 pt-[3px]">层级</button>
        <button className="h-[19px] w-[48px] border-r-2 border-b-2 border-l border-[#888] border-l-white pt-[2px]">可见度</button>
        <button className="ml-px h-[19px] w-[60px] border-r-2 border-b-2 border-l border-[#888] border-l-white pt-[2px]">项目视图</button>
      </div>
    </aside>
  );
}

function ScrollBar() {
  return (
    <div className="flex w-4 shrink-0 flex-col items-center bg-[#f0f0f0]">
      <button aria-label="向上" className="flex h-[17px] items-center"><svg width="7" height="4" aria-hidden="true"><path d="M0 4l3.500-4L7 4z" fill="#444" /></svg></button>
      <div className="flex min-h-0 flex-[598] items-center justify-center self-stretch rounded-[2px] border border-[#999] bg-gradient-to-r from-[#f5f5f5] to-[#c8c8c8]">
        <svg width="7" height="8" stroke="#555" shapeRendering="crispEdges" aria-hidden="true"><path d="M0 .5h7M0 3.500h7M0 6.500h7" /></svg>
      </div>
      <div className="flex-[42]" />
      <button aria-label="向下" className="flex h-[17px] items-center"><svg width="7" height="4" aria-hidden="true"><path d="M0 0h7L3.500 4z" fill="#444" /></svg></button>
    </div>
  );
}

function Workspace() {
  return (
    <main className="flex min-w-0 flex-1 flex-col">
      <div className="flex min-h-0 flex-1 border-t border-r-2 border-b-2 border-l border-[#777] bg-[#f0edf0] pt-1 pr-[2px] pb-[5px] pl-1">
        <div className="flex min-w-0 flex-1 border-t-2 border-l-2 border-r border-b border-t-[#666] border-l-[#666] border-r-white border-b-white">
          <div className="relative flex min-w-0 flex-1 overflow-hidden bg-[#ababab]">
            <Schematic />
            <div className="w-4 bg-gradient-to-r from-[#606060] to-[#ababab]" />
            <Multimeter name="XMM4" value="3.75 A" mode="A" className="top-[21px] left-[209px]" />
            <Multimeter name="XMM2" value="989.228 mV" mode="V" className="top-[359px] left-[241px]" />
            <Multimeter name="XMM1" value="2.105 V" mode="V" className="top-[359px] left-[438px]" />
            <Multimeter name="XMM3" value="10.567 V" mode="V" className="top-[358px] left-[634px]" />
          </div>
          <ScrollBar />
        </div>
      </div>
      <div className="flex h-[26px] shrink-0 items-start justify-between pr-[2px] pl-[4px]">
        <button className="flex h-[23px] items-center gap-1 rounded-b-[3px] border-r-2 border-b-2 border-l border-black border-l-white bg-[#f0f0f0] pr-1 pl-[2px] text-[12px] leading-4">
          <SchematicIcon />LM324N过流保护 *
        </button>
        <button aria-label="窗口列表" className={`mt-[5px] flex h-[15px] w-[15px] items-center justify-center ${raised}`}>
          <svg width="12" height="12" fill="#fff" stroke="#0000a0" shapeRendering="crispEdges" aria-hidden="true"><path d="M.5 1.500h6v4h-6zM2.500 3.500h6v4h-6zM5.500 6.500h5v4h-5zM8 2.500h3v-2" /></svg>
        </button>
      </div>
    </main>
  );
}

function InstrumentRack() {
  const cell = "flex h-[21px] items-center justify-center";
  const rule = <span className="mx-[2px] my-[2px] h-px bg-[#999]" />;
  return (
    <aside className="w-[27px] shrink-0 pt-[2px]">
      <div className="flex flex-col border-r border-b border-t border-t-white border-[#9a9a9a] pt-[10px] pb-[1px]">
        <button title="万用表" aria-label="万用表" className={cell}>
          <Icon><path d="M5 2h6v3H5z" fill="#0cc" /><path d="M4 6h8v8H4z" fill="#fff" /><circle cx="8" cy="10" r="2" /><path d="M1.500 1v3" stroke="#fd0" strokeWidth="2" /><path d="M1.500 4v7l3 3" strokeWidth="2" /><path d="M14 1v10l-2 3" stroke="#e22" strokeWidth="2" /></Icon>
        </button>
        {instruments.map(({ name, bg, art }, i) => (
          <button key={name} title={name} aria-label={name} className={cell}>
            <Icon>
              <path d="M.5.500h15v14H.5z" fill="#f5f5f5" stroke="#aaa" />
              <path d={i === 8 ? "M2 1h13v12H2z" : "M1 1h14v6H1z"} fill={bg} stroke="#888" />
              {art}
              {i === 8 ? null : i < 13 ? (
                <><path d="M2 10.500h12" strokeDasharray="2 2" stroke={i % 2 ? "#400" : "#004"} /><path d="M4 12.500h9" strokeDasharray="1 2" /></>
              ) : (
                <><path d="M1 11.500h4M3.500 10v4" stroke="#400" /><path d={i === 16 ? "M7 9.500h4M9 9v5M12.500 9v5M15 9l-2 2.500 2 2.500" : "M7.500 14V9.500h3V14M8 12h2M15 9.500h-2.500v4H15v-2h-1"} stroke="#0000b0" /></>
              )}
            </Icon>
          </button>
        ))}
        {rule}
        <button title="LabVIEW 仪器" aria-label="LabVIEW 仪器" className="flex h-[27px] items-center justify-center">
          <Icon><path d="M2 2h12v12H2z" fill="#000" stroke="#088" strokeDasharray="2 1" /><path d="M5.500 4v8l7-4z" fill="#ff0" /><path d="M0 6h4" stroke="#00f" /><path d="M0 10h4" stroke="#f00" /><path d="M13 8h3" stroke="#e00" /></Icon>
        </button>
        <svg width="24" height="9" aria-hidden="true"><path d="M11 0l3 3-3 3z" /></svg>
        {rule}
        <button title="NI ELVISmx 仪器" aria-label="NI ELVISmx 仪器" className="flex h-[27px] items-center justify-center">
          <Icon><path d="M1 5l4 3 5-5 5 4-5 6-8-3M4 5l3 3M10 12l4-4" stroke="#aaa" /></Icon>
        </button>
        <svg width="24" height="9" aria-hidden="true"><path d="M11 0l3 3-3 3z" fill="#aaa" /></svg>
        {rule}
        <button title="电流探针" aria-label="电流探针" className="flex h-[27px] items-center justify-center">
          <Icon><circle cx="4" cy="11.500" r="3" stroke="#900" strokeWidth="2" /><path d="M6 11.500h10" stroke="#e00" /><path d="M6 9l3-6h2l1-2 1 2 1-2 1 2" /><path d="M6 9l3-5" strokeWidth="2" /></Icon>
        </button>
      </div>
    </aside>
  );
}

const resultTabs: [string, string][] = [
  ["结果", "h-4 w-11 pt-px pl-[6px]"],
  ["网络", "h-[14px] w-10 pl-1"],
  ["元器件", "h-[14px] w-[47px] pl-1"],
  ["敷铜层", "h-[14px] w-[47px] pl-1"],
  ["仿真", "h-[14px] w-10 pl-1"],
];

function BottomPanel() {
  return (
    <section className="relative flex h-[29px] shrink-0 items-start border-t-2 border-[#777] pl-[7px]">
      <div className="flex h-full flex-col gap-[3px] overflow-hidden pt-[2px]">
        <button aria-label="关闭面板" className={`flex h-[13px] w-[13px] shrink-0 items-center justify-center ${raised}`}><svg width="7" height="7" stroke="#000" strokeWidth="2" aria-hidden="true"><path d="M0 0l6 6M6 0L0 6" /></svg></button>
        <button aria-label="展开" className={`flex h-[13px] w-[13px] shrink-0 items-center justify-center ${raised}`}><svg width="4" height="7" aria-hidden="true"><path d="M0 0l3 3-3 3z" fill="#999" /></svg></button>
      </div>
      <div className="mt-[5px] ml-2 flex h-4 items-start gap-px overflow-hidden text-[12px] leading-[12px]">
        {resultTabs.map(([t, size]) => (
          <button key={t} className={`shrink-0 border-r-2 border-b-2 border-l border-[#888] border-l-white text-left ${size}`}>{t}</button>
        ))}
      </div>
      <span className="absolute top-[6px] right-[8px] left-[28px] h-[4px] border-t border-[#ddd] bg-white" />
    </section>
  );
}

export default function App() {
  return (
    <div className={`flex h-screen flex-col overflow-hidden bg-[#efefef] text-black ${uiFont}`}>
      <TitleBar />
      <MenuBar />
      <StandardToolbar />
      <ComponentToolbar />
      <div className="flex min-h-0 flex-1">
        <DesignToolbox />
        <span className="w-1 shrink-0" />
        <Workspace />
        <InstrumentRack />
      </div>
      <BottomPanel />
      <footer className="flex h-[17px] shrink-0 items-stretch border-t-2 border-[#999] bg-[#f1edec] text-[12px] leading-[18px]">
        <span className="flex-1 pl-[2px]">如需帮助，,请按 F1</span>
        <span className="w-[39px] border-r border-[#ccc]">-</span>
        <span className="w-[123px] border-r border-[#ccc]" />
        <span className="w-[123px] border-r border-[#ccc] pl-1">传递: 0.503 s</span>
        <span className="flex w-[64px] gap-[2px] pt-[3px] pl-1">
          {range(7).map((i) => <span key={i} className="w-[6px] border-t border-l border-[#999] bg-[#e4e6e8]" />)}
        </span>
      </footer>
    </div>
  );
}
